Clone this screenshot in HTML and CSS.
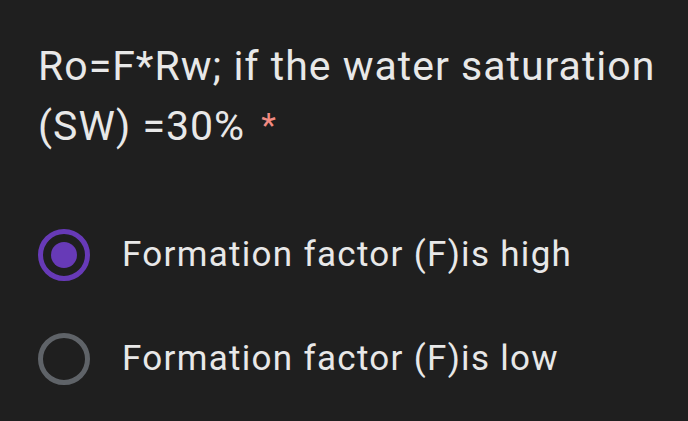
FILE: index.html
```html
<!DOCTYPE html>
<html>
<head>
<meta charset="utf-8">
<link rel="stylesheet" href="styles.css">
</head>
<body>
<div class="card">
  <div class="question">Ro=F*Rw; if the water saturation (SW) =30% <span class="req">*</span></div>
  <div class="options">
    <div class="option">
      <span class="radio checked"><span class="dot"></span></span>
      <span class="label">Formation factor (F)is high</span>
    </div>
    <div class="option">
      <span class="radio"></span>
      <span class="label">Formation factor (F)is low</span>
    </div>
  </div>
</div>
</body>
</html>
```

FILE: styles.css
```css
html, body {
  margin: 0;
  padding: 0;
  background: #1f1f1f;
  width: 688px;
  height: 421px;
  overflow: hidden;
}
.card {
  padding: 36px 0 0 38px;
  font-family: Roboto, "Liberation Sans", sans-serif;
  color: #e8e8e8;
}
.question {
  font-size: 41px;
  line-height: 60px;
  letter-spacing: 1px;
  width: 640px;
}
.req {
  color: #f28b82;
  font-size: 34px;
  line-height: 1;
  margin-left: 5px;
  vertical-align: 3px;
}
.options {
  margin-top: 73px;
  display: flex;
  flex-direction: column;
  gap: 52px;
}
.option {
  display: flex;
  align-items: center;
  height: 52px;
}
.radio {
  box-sizing: border-box;
  width: 52px;
  height: 52px;
  border-radius: 50%;
  border: 5px solid #5f6368;
  display: flex;
  align-items: center;
  justify-content: center;
  flex: none;
}
.radio.checked {
  border-color: #673ab7;
}
.dot {
  width: 26px;
  height: 26px;
  border-radius: 50%;
  background: #673ab7;
}
.label {
  margin-left: 32px;
  font-size: 35px;
  line-height: 40px;
  letter-spacing: 1.3px;
}
```
